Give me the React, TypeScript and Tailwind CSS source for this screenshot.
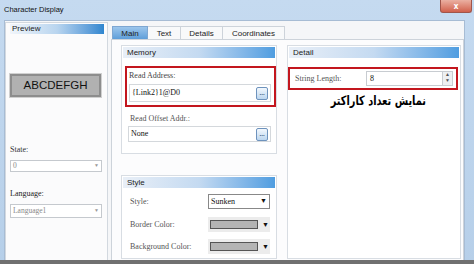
// Character Display properties dialog (Windows 7 style)

const sans = { fontFamily: '"Liberation Sans", Arial, sans-serif' }
const serif = { fontFamily: '"Liberation Serif", "Times New Roman", serif' }

function GroupHeader({ title }: { title: string }) {
  return (
    <div
      className="mx-[1px] mt-[1px] h-[11px] bg-gradient-to-r from-[#e9eff7] via-[#c4daf1] to-[#4f9de0] pl-[4px] text-[8px] leading-[11px] text-[#222]"
      style={sans}
    >
      {title}
    </div>
  )
}

function DotsButton() {
  return (
    <div className="flex h-[13px] w-[12px] items-end justify-center rounded-[2px] border border-[#6e93bd] bg-gradient-to-b from-[#f3f8fd] to-[#bcd6ef] pb-[2px] text-[7px] leading-none font-bold text-[#1c3d66]">
      ...
    </div>
  )
}

function ColorPicker() {
  return (
    <div className="flex h-[15px] w-[62px] items-center bg-[#ececec] pl-[2px]">
      <div className="h-[9px] w-[48px] border border-[#555] bg-[#b4b4b4]" />
      <span className="ml-[4px] text-[7px] leading-none text-[#111]">▼</span>
    </div>
  )
}

export default function App() {
  return (
    <div className="relative flex h-[264px] w-[474px] flex-col overflow-hidden bg-gradient-to-b from-[#c5daf0] to-[#b6cfe9]">
      {/* title bar */}
      <div className="flex h-[20px] items-center pl-[4px] text-[7.5px] text-[#111]" style={sans}>
        Character Display
      </div>
      <div className="absolute top-0 right-[2px] flex h-[13px] w-[32px] items-center justify-center rounded-b-[3px] border border-t-0 border-[#a0554a] bg-gradient-to-b from-[#eab0a2] to-[#d0604c] text-[8px] font-bold text-white">
        x
      </div>

      <div className="flex flex-1">
        <div className="ml-[4px] flex w-[461px] border border-b-0 border-[#a7bcd4] bg-[#f5f6f8]">
          {/* left: preview */}
          <div className="mt-[1px] flex w-[103px] flex-col border border-b-0 border-[#d2d8df] bg-[#fbfbfc] pl-[4px]">
            <div
              className="mt-[1px] h-[10px] w-[94px] bg-gradient-to-r from-[#f1f5fa] via-[#b9d5ef] to-[#2f86cf] pl-[2px] text-[8px] leading-[10px] text-[#222]"
              style={sans}
            >
              Preview
            </div>
            <div className="mt-[40px] flex h-[23px] w-[91px] items-center justify-center border-2 border-[#8d8d8d] bg-[#b1b1b1] outline outline-1 outline-[#d0d0d0]">
              <span className="text-[11.5px] text-[#111]" style={sans}>
                ABCDEFGH
              </span>
            </div>
            <div className="mt-[47px] text-[8px] text-[#333]" style={serif}>
              State:
            </div>
            <div className="mt-[4px] flex h-[12px] w-[92px] items-center justify-between border border-[#c5c9ce] bg-white px-[2px] text-[7.5px] text-[#888]" style={serif}>
              <span>0</span>
              <span className="text-[5px] text-[#999]">▼</span>
            </div>
            <div className="mt-[16px] text-[8px] text-[#222]" style={serif}>
              Language:
            </div>
            <div className="mt-[4px] flex h-[14px] w-[92px] items-center justify-between border border-[#c5c9ce] bg-white px-[2px] text-[7.5px] text-[#888]" style={serif}>
              <span>Language1</span>
              <span className="text-[5px] text-[#999]">▼</span>
            </div>
          </div>

          {/* right: tabs */}
          <div className="ml-[3px] flex flex-1 flex-col">
            <div className="mt-[5px] flex h-[13px] pl-[1px] text-[8px] leading-[13px] text-[#222]" style={sans}>
              <div className="w-[36px] border border-b-0 border-[#7ea7d2] bg-gradient-to-b from-[#9cc6ec] to-[#5e9ed9] text-center">
                Main
              </div>
              <div className="w-[33px] border border-b-0 border-l-0 border-[#cdd3da] bg-[#f8f9fa] text-center">
                Text
              </div>
              <div className="w-[42px] border border-b-0 border-l-0 border-[#cdd3da] bg-[#f8f9fa] text-center">
                Details
              </div>
              <div className="w-[62px] border border-b-0 border-l-0 border-[#cdd3da] bg-[#f8f9fa] text-center">
                Coordinates
              </div>
            </div>
            <div className="flex flex-1 gap-[10px] border border-b-0 border-[#cdd3da] bg-[#fcfcfd] pt-[5px] pl-[9px]">
              {/* memory + style column */}
              <div className="flex w-[156px] flex-col">
                <div className="flex h-[109px] flex-col border border-[#d8dde3] bg-white">
                  <GroupHeader title="Memory" />
                  <div className="mt-[8px] ml-[3px] flex h-[41px] w-[151px] flex-col border-2 border-[#c3161e] pl-[2px]">
                    <div className="mt-[2px] text-[8px] text-[#444]" style={serif}>
                      Read Address:
                    </div>
                    <div className="mt-[2px] flex h-[18px] w-[142px] items-center justify-between border border-[#d4d8dc] bg-white pr-[2px] pl-[2px] text-[8px] text-[#111]" style={serif}>
                      <span>{"{Link2}1@D0"}</span>
                      <DotsButton />
                    </div>
                  </div>
                  <div className="mt-[6px] ml-[8px] text-[8px] text-[#555]" style={serif}>
                    Read Offset Addr.:
                  </div>
                  <div className="mt-[1px] ml-[6px] flex h-[16px] w-[143px] items-center justify-between border border-[#d4d8dc] bg-white pr-[2px] pl-[2px] text-[8px] text-[#111]" style={serif}>
                    <span>None</span>
                    <DotsButton />
                  </div>
                </div>
                <div className="mt-[21px] mb-[1px] flex flex-1 flex-col border border-[#d8dde3] bg-white">
                  <GroupHeader title="Style" />
                  <div className="mt-[6px] flex h-[15px] items-center justify-between pr-[6px] pl-[8px]">
                    <span className="text-[8px] text-[#555]" style={serif}>
                      Style:
                    </span>
                    <div className="flex h-[15px] w-[62px] items-center justify-between border border-[#888] bg-white px-[2px]" style={serif}>
                      <span className="text-[8px] text-[#111]">Sunken</span>
                      <span className="text-[7px] leading-none text-[#111]">▼</span>
                    </div>
                  </div>
                  <div className="mt-[8px] flex h-[15px] items-center justify-between pr-[6px] pl-[8px]">
                    <span className="text-[8px] text-[#555]" style={serif}>
                      Border Color:
                    </span>
                    <ColorPicker />
                  </div>
                  <div className="mt-[7px] flex h-[15px] items-center justify-between pr-[6px] pl-[8px]">
                    <span className="text-[8px] text-[#555]" style={serif}>
                      Background Color:
                    </span>
                    <ColorPicker />
                  </div>
                </div>
              </div>

              {/* detail column */}
              <div className="mb-[1px] flex w-[174px] flex-col border border-[#d8dde3] bg-white">
                <GroupHeader title="Detail" />
                <div className="mt-[9px] flex h-[23px] w-[170px] items-center border-2 border-[#c3161e] pl-[5px]">
                  <span className="w-[71px] text-[8px] text-[#555]" style={serif}>
                    String Length:
                  </span>
                  <div className="flex h-[15px] w-[87px] items-center justify-between border border-[#c8ccd1] bg-white pl-[3px] text-[8px] text-[#111]" style={serif}>
                    <span>8</span>
                    <div className="flex h-[13px] w-[10px] flex-col border-l border-[#c8ccd1] bg-[#eef0f2] text-[5px] leading-[6px] text-[#555]">
                      <span className="text-center">▲</span>
                      <span className="text-center">▼</span>
                    </div>
                  </div>
                </div>
                <div className="mt-[3px] flex justify-end pr-[34px]">
                  <span
                    dir="rtl"
                    className="origin-right scale-x-75 text-[13px] font-bold leading-[16px] whitespace-nowrap text-black"
                    style={{ fontFamily: '"DejaVu Sans", sans-serif' }}
                  >
                    نمایش تعداد کاراکتر
                  </span>
                </div>
              </div>
            </div>
          </div>
        </div>
      </div>
      <div className="h-[4px] bg-[#707070]" />
    </div>
  )
}
